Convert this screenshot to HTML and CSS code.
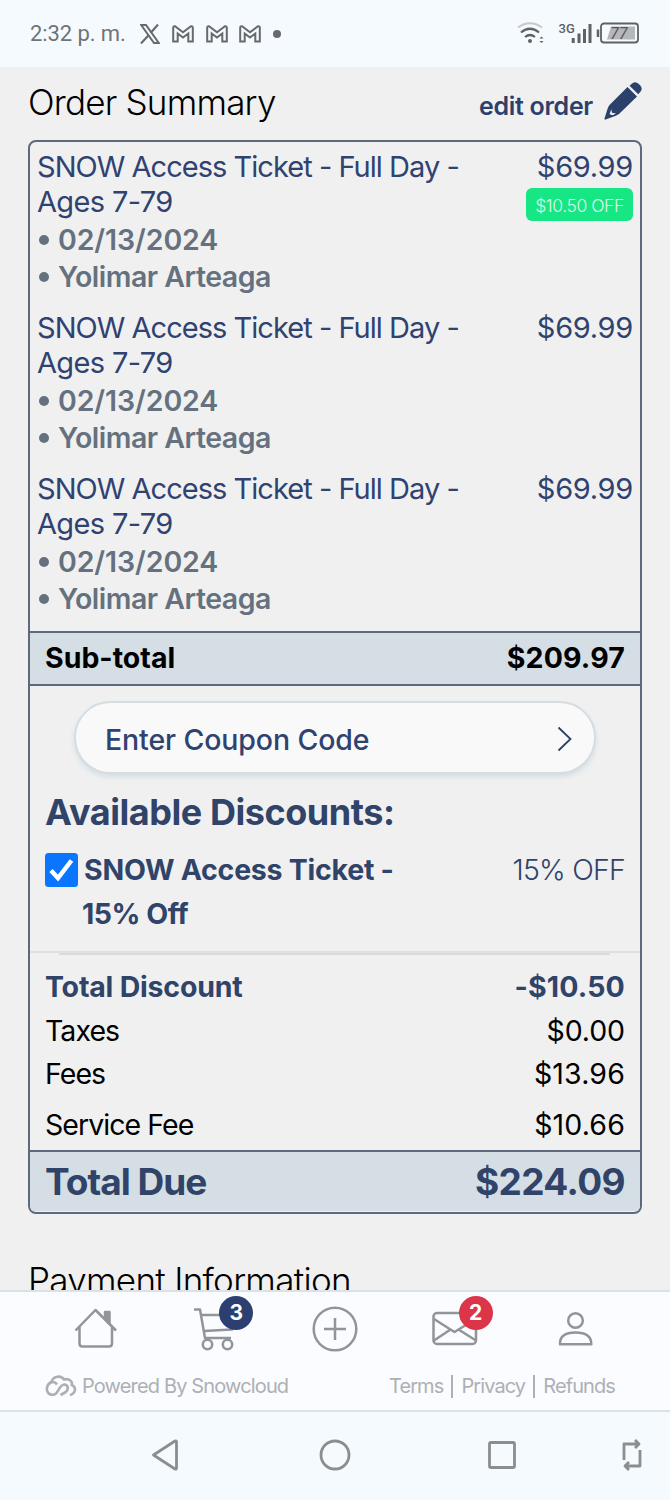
FILE: index.html
```html
<!DOCTYPE html>
<html lang="en">
<head>
<meta charset="utf-8">
<title>Order Summary</title>
<link rel="stylesheet" href="styles.css">
</head>
<body>
<div class="screen">
  <header class="status">
    <span class="clock">2:32 p. m.</span>
    <svg class="x-logo" width="20" height="20" viewBox="0 0 20 20" fill="none" stroke="#67696c"><path d="M1.200 1h4.800l12.800 18h-4.800z" stroke-width="2"/><path d="M18 .6l-7.400 8.300M8.600 11.200L1 19.400" stroke-width="2.200"/></svg>
    <svg class="gmail" width="22" height="18" viewBox="0 0 22 18"><path d="M1.200 2.700Q1.200 1 3 1.200L11 7.200 19 1.200Q20.800 1 20.800 2.700V16.500H16.300V8.500L11 12.500 5.700 8.500V16.500H1.200Z"/></svg>
    <svg class="gmail" width="22" height="18" viewBox="0 0 22 18"><path d="M1.200 2.700Q1.200 1 3 1.200L11 7.200 19 1.200Q20.800 1 20.800 2.700V16.500H16.300V8.500L11 12.500 5.700 8.500V16.500H1.200Z"/></svg>
    <svg class="gmail" width="22" height="18" viewBox="0 0 22 18"><path d="M1.200 2.700Q1.200 1 3 1.200L11 7.200 19 1.200Q20.800 1 20.800 2.700V16.500H16.300V8.500L11 12.500 5.700 8.500V16.500H1.200Z"/></svg>
    <span class="more"></span>
    <svg class="signals" width="124" height="26" viewBox="0 0 124 26" fill="none" stroke="#5f6163">
      <path d="M2 6.500Q14-2 26 6.500" stroke="#c6c9cc" stroke-width="2"/>
      <path d="M5 11.500Q14 4 23 11.500M9 16Q14 12 19 16" stroke-width="2.200"/>
      <circle cx="14" cy="20" r="2" fill="#5f6163" stroke="none"/>
      <path d="M23.500 17.500L25.500 15.500 27.500 17.500ZM23.500 20L25.500 22 27.500 20Z" fill="#5f6163" stroke="none"/>
      <text class="net" x="42.500" y="11.500">3G</text>
      <path d="M57.200 17V22M63 12.500V22M68.500 8V22M74 3V22" stroke-width="3"/>
      <path d="M82 8.500V16" stroke-width="2.500"/>
      <rect x="85" y="2.500" width="37" height="19" rx="3" stroke-width="1.800"/>
      <path d="M95 5.500H119V18.500H91Z" fill="#b5b7ba" stroke="none"/>
      <text class="level" x="94" y="17.500">77</text>
    </svg>
  </header>

  <main class="page">
    <div class="head">
      <h1 class="title">Order Summary</h1>
      <a class="edit">edit order
        <svg width="38" height="38" viewBox="0 0 38 38" fill="#2c406c"><path d="M23.500 5L33 14.500 15 32Q13 33.600 10.500 34.300L1.500 37.600Q.2 37.800.5 36.500L3.500 27Q4 25 5.500 23Z"/><path d="M25.500 3.700L28.500 1.200Q31.500-.8 34.800 2L36.300 3.500Q38.800 6.500 36.600 9.500L34.300 12.300Z"/><path d="M7.200 27.200L8 30.700 12 31.500 8.500 33.200 5.600 32.300Z" fill="#f0f0f0"/></svg>
      </a>
    </div>

    <section class="card">
      <div class="items">
        <article class="item">
          <div class="desc"><p class="name">SNOW Access Ticket - Full Day -<br><span class="ages">Ages 7-79</span></p>
            <ul class="meta"><li>02/13/2024</li><li class="person">Yolimar Arteaga</li></ul></div>
          <div class="cost"><span class="price">$69.99</span><span class="off">$10.50 OFF</span></div>
        </article>
        <article class="item">
          <div class="desc"><p class="name">SNOW Access Ticket - Full Day -<br><span class="ages">Ages 7-79</span></p>
            <ul class="meta"><li>02/13/2024</li><li class="person">Yolimar Arteaga</li></ul></div>
          <div class="cost"><span class="price">$69.99</span></div>
        </article>
        <article class="item">
          <div class="desc"><p class="name">SNOW Access Ticket - Full Day -<br><span class="ages">Ages 7-79</span></p>
            <ul class="meta"><li>02/13/2024</li><li class="person">Yolimar Arteaga</li></ul></div>
          <div class="cost"><span class="price">$69.99</span></div>
        </article>
      </div>
      <div class="row subtotal"><span class="sub-label">Sub-total</span><span class="strong-value">$209.97</span></div>
      <button class="coupon"><span>Enter Coupon Code</span>
        <svg width="16" height="26" viewBox="0 0 16 26" fill="none" stroke="#2c406c" stroke-width="1.800"><path d="M1.500 1.500L13.500 13 1.500 24.500"/></svg>
      </button>
      <h2 class="avail">Available Discounts:</h2>
      <div class="discount">
        <svg class="check" width="33" height="34" viewBox="0 0 33 34"><rect width="33" height="34" rx="3.500" fill="#0a75ff"/><path d="M6 17.500L13 25 26.500 7.500" fill="none" stroke="#fff" stroke-width="4.500"/></svg>
        <p class="dname"><span class="d1">SNOW Access Ticket -</span><br><span class="d2">15% Off</span></p>
        <span class="pct">15% OFF</span>
      </div>
      <hr class="rule">
      <div class="row total-discount"><span class="td-label">Total Discount</span><span class="strong-value">-$10.50</span></div>
      <div class="row taxes"><span>Taxes</span><span class="amt">$0.00</span></div>
      <div class="row fees"><span>Fees</span><span class="amt">$13.96</span></div>
      <div class="row service"><span>Service Fee</span><span class="amt">$10.66</span></div>
      <div class="row due"><span class="due-label">Total Due</span><span class="due-value">$224.09</span></div>
    </section>
    <h1 class="title payment">Payment Information</h1>
  </main>

  <footer class="tabs">
    <nav class="tabrow">
      <a class="tab"><svg width="44" height="42" viewBox="0 0 44 42"><path d="M1.500 22.500L21.500 2 42 22.500M5.500 19V35.500Q5.500 38.500 8.500 38.500H35Q38 38.500 38 35.500V19"/><path d="M31 4H35.500V15L31 10.500Z" fill="#919598"/></svg></a>
      <a class="tab"><svg width="44" height="44" viewBox="0 0 44 44"><path d="M1 2.500H7L12 31H38M8.500 8H42L39 22.500 11 24"/><circle cx="14.500" cy="37.500" r="4.700"/><circle cx="34.500" cy="37.500" r="4.700"/></svg><b class="badge navy">3</b></a>
      <a class="tab"><svg width="46" height="46" viewBox="0 0 46 46"><circle cx="23" cy="23" r="21.300"/><path d="M23 12V34M12 23H34"/></svg></a>
      <a class="tab"><svg width="46" height="36" viewBox="0 0 46 36"><rect x="1.500" y="2" width="42.500" height="31" rx="3.500"/><path d="M2 8L18.500 18.500 22.500 21 26.500 18.500 44 8M2 29.500L18.500 18.500M44 29.500L26.500 18.500"/></svg><b class="badge red">2</b></a>
      <a class="tab person-tab"><svg width="36" height="36" viewBox="0 0 36 36"><circle cx="17.500" cy="9.500" r="7.300"/><path d="M2 33.300Q1.500 21.500 17.500 21.500 33.500 21.500 33.300 33.300Z"/></svg></a>
    </nav>
    <div class="legal">
      <svg class="cloud" width="32" height="22" viewBox="0 0 32 22" fill="none" stroke="#adb0b3" stroke-width="2.600"><path d="M12 9.500C9.500 5.500 4 6.500 2.300 11.500C.8 16 3.500 20 8 19.800C14 19.500 13 10 19.500 9.500C24 10 23.500 15.500 20 17.500L15.500 20"/><path d="M6.500 6.800C8.500.5 16.500.3 19 4.500C24.500 3 27.500 6.500 26.800 10C31.500 12 31 18.500 25 20"/></svg>
      <span class="powered">Powered By Snowcloud</span>
      <span class="links"><span>Terms</span><i></i><span>Privacy</span><i></i><span>Refunds</span></span>
    </div>
  </footer>

  <nav class="system">
    <svg width="26" height="32" viewBox="0 0 26 32"><path d="M1.500 16L23 2Q24.500 1.500 24.500 3V29Q24.500 30.500 23 30Z"/></svg>
    <svg class="home-key" width="32" height="32" viewBox="0 0 32 32"><circle cx="16" cy="16" r="14"/></svg>
    <svg class="recent-key" width="30" height="30" viewBox="0 0 30 30"><rect x="2.500" y="2.500" width="25" height="25" rx="1.500"/></svg>
    <svg class="rotate-key" width="20" height="32" viewBox="0 0 20 32"><path d="M2 21V5H17M13 1L17 5 13 9M18 11V27H3M7 23L3 27 7 31"/></svg>
  </nav>
</div>
</body>
</html>
```
FILE: styles.css
```css
* { box-sizing: border-box; }
body { margin: 0; font-family: Inter, "Liberation Sans", sans-serif; background: #f5faff; }
h1, h2, p, ul, hr { margin: 0; padding: 0; font-weight: inherit; }
svg { display: block; flex: none; }
.screen { width: 670px; height: 1500px; display: flex; flex-direction: column; overflow: hidden; }

.status { height: 67px; flex: none; display: flex; align-items: center; padding: 0 30px; background: #f5faff; color: #707376; }
.clock { font: 22px Roboto, sans-serif; width: 110px; white-space: nowrap; letter-spacing: -0.1px; }
.x-logo { margin-right: 12px; }
.gmail { margin-right: 11.5px; fill: none; stroke: #67696c; stroke-width: 2; }
.more { width: 8px; height: 8px; border-radius: 50%; background: #67696c; }
.signals { margin-left: auto; margin-right: 0; }
.net { font: 500 13px Roboto, sans-serif; fill: #5f6163; stroke: none; }
.level { font: italic 16px Roboto, sans-serif; fill: #55585a; stroke: none; }

.page { flex: none; height: 1223px; background: #f0f0f0; padding: 0 28px; overflow: hidden; }
.head { height: 73px; display: flex; justify-content: space-between; }
.title { font-size: 35px; font-weight: 300; line-height: 42px; letter-spacing: -0.8px; color: #000; padding-top: 14px; }
.edit { display: flex; height: 38px; margin-top: 15px; gap: 11px; color: #2c406c; font-size: 25px; font-weight: 600; line-height: 48px; letter-spacing: -0.3px; }

.card { height: 1074px; border: 2px solid #5d6a7c; border-radius: 8px; overflow: hidden; color: #000; font-size: 28.5px; display: flex; flex-direction: column; }
.items { height: 489px; padding: 7px 7px 0; flex: none; }
.item { height: 161px; display: flex; justify-content: space-between; color: #2f4270; }
.name { font-size: 29px; font-weight: 400; line-height: 35.3px; letter-spacing: -0.97px; white-space: nowrap; }
.ages { letter-spacing: -0.65px; }
.meta { list-style: none; margin-top: 1px; color: #65717f; font-weight: 600; line-height: 37.2px; letter-spacing: -0.1px; }
.person { letter-spacing: -0.5px; }
.meta li { display: flex; align-items: center; gap: 9px; padding-left: 2px; }
.meta li::before { content: ""; width: 10px; height: 10px; border-radius: 50%; background: #65717f; margin-top: 2px; }
.cost { display: flex; flex-direction: column; align-items: flex-end; }
.price { font-size: 29px; font-weight: 400; line-height: 35.3px; letter-spacing: -0.3px; }
.off { width: 107px; height: 33px; margin-top: 4px; border-radius: 6px; background: #17e685; color: #d9fbe9; font-size: 17.500px; font-weight: 300; line-height: 36px; letter-spacing: -0.45px; text-align: center; }

.row { display: flex; justify-content: space-between; align-items: center; padding: 0 15px 2px; flex: none; letter-spacing: -0.95px; }
.subtotal { height: 55px; border: solid #5d6a7c; border-width: 2px 0; background: #d4dee4; font-weight: 700; }
.sub-label { letter-spacing: 0; }
.strong-value { letter-spacing: 0.15px; }
.coupon { flex: none; width: 522px; height: 73px; margin: 15px 0 0 44px; padding: 4px 21px 0 29px; border: 2px solid #d5dde3; border-radius: 37px; background: #f9f9f9; box-shadow: 0 3px 5px #d3dde2; display: flex; justify-content: space-between; align-items: center; font: 500 28.5px Inter, sans-serif; letter-spacing: -0.12px; color: #2f4270; }
.coupon svg { margin-top: -2px; }
.avail { margin: 16px 0 0 15px; font-size: 36px; font-weight: 700; line-height: 44px; letter-spacing: -0.45px; color: #304369; flex: none; }
.discount { display: flex; height: 117px; flex: none; padding: 14px 15px 0; color: #304369; line-height: 43.5px; }
.check { margin-top: 5px; }
.dname { font-weight: 700; margin-left: 6px; white-space: nowrap; letter-spacing: -0.25px; }
.d2 { margin-left: -2px; letter-spacing: -0.5px; }
.pct { margin-left: auto; font-weight: 300; letter-spacing: -0.8px; }
.rule { flex: none; width: auto; height: 4px; border: 0; border-top: 2px solid #e0e0e0; background: linear-gradient(#dadada, #dadada) no-repeat 29px 0 / 551px 2px; }
.total-discount { height: 43px; margin-top: 11px; font-weight: 700; color: #304369; }
.td-label { letter-spacing: -0.2px; }
.taxes { height: 44px; }
.fees { height: 43px; }
.service { height: 54px; padding-top: 4px; }
.taxes, .fees, .service { font-weight: 400; }
.taxes .amt { letter-spacing: -0.1px; }
.amt { letter-spacing: 0.15px; }
.due { height: 61px; border-top: 2px solid #5d6a7c; background: #d4dee4; color: #304369; font-size: 37px; font-weight: 700; padding-bottom: 0; }
.due-label { letter-spacing: -1px; }
.due-value { letter-spacing: -0.6px; }
.payment { padding-top: 45px; white-space: nowrap; letter-spacing: -0.7px; }

.tabs { height: 122px; flex: none; background: #fafcff; border-top: 2px solid #dbe2e7; border-bottom: 2px solid #dbe2e7; }
.tabrow { height: 74px; padding: 0 36px; display: grid; grid-template-columns: repeat(5, 1fr); place-items: center; }
.tab { position: relative; display: block; }
.person-tab { padding-left: 3px; }
.tab svg { fill: none; stroke: #919598; stroke-width: 2.500; stroke-linejoin: round; }
.badge { position: absolute; width: 34px; height: 34px; border-radius: 50%; color: #fff; font-size: 21px; line-height: 34px; text-align: center; }
.navy { background: #2b3f70; left: 26px; top: -11px; }
.red { background: #dc3448; left: 27px; top: -15px; }
.legal { display: flex; align-items: center; height: 40px; padding: 0 55px 0 45px; color: #adb0b3; font-size: 20px; letter-spacing: -0.85px; }
.powered { margin-left: 5px; }
.links { display: flex; align-items: center; margin-left: auto; gap: 8px; letter-spacing: -0.9px; }
.links i { width: 2px; height: 23px; background: #adb0b3; }

.system { height: 88px; flex: none; padding: 0 0 2px 152px; display: flex; align-items: center; background: #f5faff; }
.system svg { fill: none; stroke: #8b8e90; stroke-width: 2.800; stroke-linejoin: round; }
.system .home-key { margin-left: 141px; }
.system .recent-key { margin-left: 136px; }
.system .rotate-key { margin-left: 105px; }
```
